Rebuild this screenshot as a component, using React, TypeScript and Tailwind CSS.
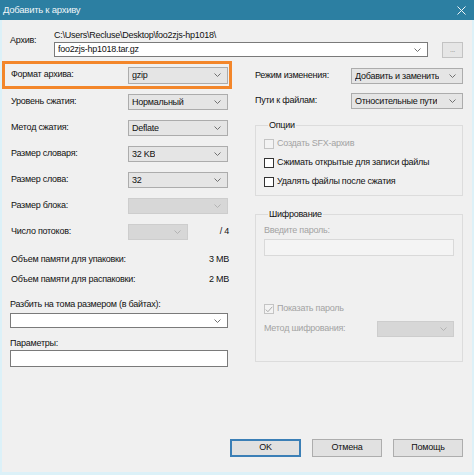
import React from "react";

type Variant = "ro" | "edit" | "disabled";

function Chevron({ className }: { className: string }) {
  return (
    <svg width="7" height="4" viewBox="0 0 7 4" className={className}>
      <polyline points="0.5,0.5 3.5,3.5 6.5,0.5" fill="none" stroke="currentColor" strokeWidth="1" />
    </svg>
  );
}

function Select({ value = "", className, variant = "ro" }: { value?: string; className: string; variant?: Variant }) {
  const tone =
    variant === "edit"
      ? "bg-white border-[#7a7a7a]"
      : variant === "disabled"
        ? "bg-[#d7d7d7] border-[#cdcdcd]"
        : "bg-[#e5e5e5] border-[#acacac]";
  const chev = variant === "disabled" ? "text-[#b3b3b3]" : "text-[#707070]";
  return (
    <div className={`flex items-center justify-between border pl-[3px] pr-[6px] ${tone} ${className}`}>
      <span className="truncate leading-none">{value}</span>
      <Chevron className={chev} />
    </div>
  );
}

function Check({ label, state }: { label: string; state: "off" | "disabled" | "checkedDisabled" }) {
  const box =
    state === "off" ? "border-[#333] bg-white" : "border-[#c4c4c4] bg-[#f3f3f3]";
  return (
    <div className="flex items-center gap-[3px]">
      <div className={`w-[10px] h-[10px] border flex items-center justify-center ${box}`}>
        {state === "checkedDisabled" && (
          <svg width="8" height="7" viewBox="0 0 8 7">
            <polyline points="0.8,3.6 2.9,5.7 7.3,0.8" fill="none" stroke="#a8a8a8" strokeWidth="1" />
          </svg>
        )}
      </div>
      <span className={state === "off" ? "text-[#111]" : "text-[#a3a3a3]"}>{label}</span>
    </div>
  );
}

function Row({ label, children }: { label: string; children: React.ReactNode }) {
  return (
    <div className="flex h-[26px] items-center pl-[9px]">
      <span className="w-[117px]">{label}</span>
      {children}
    </div>
  );
}

function Button({ label, primary }: { label: string; primary?: boolean }) {
  return (
    <div
      className={`h-[18px] flex items-center justify-center bg-[#e1e1e1] ${
        primary ? "w-[71px] border-2 border-[#3b7fb6]" : "w-[70px] border border-[#adadad]"
      }`}
    >
      {label}
    </div>
  );
}

export default function App() {
  return (
    <div
      className="w-[474px] h-[475px] flex flex-col bg-[#f0f0f0] text-[9px] tracking-[-0.25px] text-[#111]"
      style={{ fontFamily: '"Liberation Sans", Arial, sans-serif' }}
    >
      <div className="h-[20px] shrink-0 flex items-center justify-between bg-[#2c7fa2] pl-[3px] pr-[8px] text-[9.5px] text-[#eef5f8]">
        <span>Добавить к архиву</span>
        <svg width="9" height="9" viewBox="0 0 9 9">
          <path d="M0.5 0.5 L8.5 8.5 M8.5 0.5 L0.5 8.5" stroke="#eef5f8" strokeWidth="1" />
        </svg>
      </div>

      <div className="flex-1 flex flex-col border-x-2 border-b-[3px] border-[#dcf1f8]">
        <div className="flex pl-[8px] pt-[9px]">
          <div className="w-[44px] pt-[5px] leading-[12px]">Архив:</div>
          <div className="flex flex-col">
            <div className="h-[12px] leading-[12px]">C:\Users\Recluse\Desktop\foo2zjs-hp1018\</div>
            <div className="flex mt-[1px]">
              <Select value="foo2zjs-hp1018.tar.gz" variant="edit" className="w-[374px] h-[15px]" />
              <div className="ml-[14px] w-[21px] h-[16px] border border-[#c3c3c3] bg-[#e6e6e6] flex items-center justify-center text-[#8a8a8a] text-[7px]">
                ...
              </div>
            </div>
          </div>
        </div>

        <div className="flex">
          <div className="w-[231px] flex flex-col">
            <div className="mt-[3px] h-[28px] border-[3px] border-[#f3862a] flex items-center pl-[6px]">
              <span className="w-[117px]">Формат архива:</span>
              <Select value="gzip" className="w-[100px] h-[17px]" />
            </div>
            <Row label="Уровень сжатия:">
              <Select value="Нормальный" className="w-[100px] h-[16px]" />
            </Row>
            <Row label="Метод сжатия:">
              <Select value="Deflate" className="w-[100px] h-[16px]" />
            </Row>
            <Row label="Размер словаря:">
              <Select value="32 KB" className="w-[100px] h-[16px]" />
            </Row>
            <Row label="Размер слова:">
              <Select value="32" className="w-[100px] h-[16px]" />
            </Row>
            <Row label="Размер блока:">
              <Select variant="disabled" className="w-[100px] h-[16px]" />
            </Row>
            <Row label="Число потоков:">
              <Select variant="disabled" className="w-[60px] h-[16px]" />
              <span className="ml-auto mr-[3px]">/ 4</span>
            </Row>
            <div className="mt-[5px] flex h-[20px] items-center pl-[9px] pr-[3px] justify-between">
              <span>Объем памяти для упаковки:</span>
              <span>3 MB</span>
            </div>
            <div className="flex h-[20px] items-center pl-[9px] pr-[3px] justify-between">
              <span>Объем памяти для распаковки:</span>
              <span>2 MB</span>
            </div>
            <div className="mt-[8px] pl-[8px] h-[12px] leading-[12px]">Разбить на тома размером (в байтах):</div>
            <Select variant="edit" className="mt-[3px] ml-[8px] w-[218px] h-[15px]" />
            <div className="mt-[9px] pl-[8px] h-[12px] leading-[12px]">Параметры:</div>
            <div className="mt-[1px] ml-[8px] w-[218px] h-[17px] border border-[#7a7a7a] bg-white" />
          </div>

          <div className="flex-1 flex flex-col pl-[23px] pr-[9px]">
            <div className="mt-[10px] flex items-center justify-between">
              <span>Режим изменения:</span>
              <Select value="Добавить и заменить" className="w-[112px] h-[16px]" />
            </div>
            <div className="mt-[9px] flex items-center justify-between">
              <span>Пути к файлам:</span>
              <Select value="Относительные пути" className="w-[112px] h-[16px]" />
            </div>

            <fieldset className="mt-[10px] border border-[#dcdcdc] pl-[8px] pt-[3px] pb-[4px]">
              <legend className="ml-[4px] px-[1px] h-[12px] leading-[12px]">Опции</legend>
              <div className="h-[19px] flex items-center">
                <Check label="Создать SFX-архив" state="disabled" />
              </div>
              <div className="h-[19px] flex items-center">
                <Check label="Сжимать открытые для записи файлы" state="off" />
              </div>
              <div className="h-[19px] flex items-center">
                <Check label="Удалять файлы после сжатия" state="off" />
              </div>
            </fieldset>

            <fieldset className="mt-[12px] border border-[#dcdcdc] pl-[8px] pr-[8px] pt-[4px] pb-[24px]">
              <legend className="ml-[4px] px-[1px] h-[12px] leading-[12px]">Шифрование</legend>
              <div className="h-[12px] leading-[12px] text-[#a3a3a3]">Введите пароль:</div>
              <div className="mt-[3px] w-[190px] h-[17px] border border-[#d9d9d9] bg-[#f4f4f4]" />
              <div className="mt-[46px] h-[14px] flex items-center">
                <Check label="Показать пароль" state="checkedDisabled" />
              </div>
              <div className="mt-[5px] h-[16px] flex items-center justify-between">
                <span className="text-[#a3a3a3]">Метод шифрования:</span>
                <Select variant="disabled" className="w-[77px] h-[16px]" />
              </div>
            </fieldset>
          </div>
        </div>

        <div className="mt-auto flex justify-end gap-[11px] pr-[9px] pb-[15px]">
          <Button label="OK" primary />
          <Button label="Отмена" />
          <Button label="Помощь" />
        </div>
      </div>
    </div>
  );
}
